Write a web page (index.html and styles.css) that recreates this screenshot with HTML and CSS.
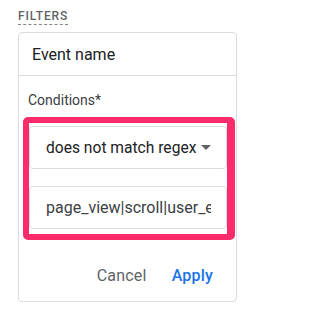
FILE: index.html
```html
<!DOCTYPE html>
<html>
<head>
<meta charset="utf-8">
<link rel="stylesheet" href="styles.css">
</head>
<body>
<div class="page">
  <div class="label-row"><span class="filters-label">FILTERS</span></div>
  <div class="card">
    <div class="card-header">Event name</div>
    <div class="card-body">
      <div class="conditions-label">Conditions*</div>
      <div class="highlight">
        <div class="field select">
          <span class="field-text">does not match regex</span>
          <svg class="arrow" width="10" height="5" viewBox="0 0 10 5"><path d="M0 0L5 5L10 0Z" fill="#5f6368"/></svg>
        </div>
        <div class="field input">
          <span class="field-text">page_view|scroll|user_engagement</span>
        </div>
      </div>
    </div>
    <div class="card-footer">
      <span class="btn cancel">Cancel</span>
      <span class="btn apply">Apply</span>
    </div>
  </div>
</div>
</body>
</html>
```
FILE: styles.css
```css
html, body {
  margin: 0;
  padding: 0;
  background: #ffffff;
}
body {
  font-family: Roboto, "Liberation Sans", Arial, sans-serif;
  width: 249px;
  height: 314px;
  overflow: hidden;
}
.page {
  padding: 5px 12px 0 18px;
}
.label-row {
  height: 27px;
}
.filters-label {
  display: inline-block;
  font-size: 12px;
  font-weight: 500;
  letter-spacing: 0.9px;
  color: #5f6368;
  line-height: 14px;
  padding-bottom: 1px;
  border-bottom: 1px dashed #80868b;
}
.card {
  width: 219px;
  height: 270px;
  box-sizing: border-box;
  border: 1px solid #dadce0;
  border-radius: 4px;
  display: flex;
  flex-direction: column;
}
.card-header {
  height: 42px;
  border-bottom: 1px solid #dadce0;
  display: flex;
  align-items: center;
  padding-left: 13px;
  font-size: 16px;
  color: #202124;
}
.card-body {
  padding: 16px 1px 0 4px;
}
.conditions-label {
  font-size: 14px;
  color: #3c4043;
  padding-left: 5px;
  line-height: 16px;
  height: 25px;
}
.highlight {
  border: 6px solid #fc2c6c;
  border-right-width: 8px;
  border-radius: 5px;
  padding: 3px 0 5px 0;
  display: flex;
  flex-direction: column;
  gap: 17px;
}
.field {
  height: 43px;
  box-sizing: border-box;
  border: 1px solid #dadce0;
  border-radius: 4px;
  display: flex;
  align-items: center;
  padding: 0 15px 0 16px;
  font-size: 16px;
  color: #202124;
  overflow: hidden;
}
.field-text {
  white-space: nowrap;
  overflow: hidden;
  flex: 1;
}
.select .field-text {
  flex: none;
  font-size: 15.6px;
}
.arrow {
  margin-left: 5px;
  flex: none;
}
.input .field-text {
  color: #3c4043;
}
.card-footer {
  flex: 1;
  display: flex;
  justify-content: flex-end;
  align-items: center;
  gap: 25px;
  padding-right: 23px;
  padding-top: 10px;
}
.btn {
  font-size: 16px;
  font-weight: 500;
  letter-spacing: 0.2px;
}
.cancel {
  color: #5f6368;
  font-weight: 400;
}
.apply {
  color: #1a73e8;
}
```
